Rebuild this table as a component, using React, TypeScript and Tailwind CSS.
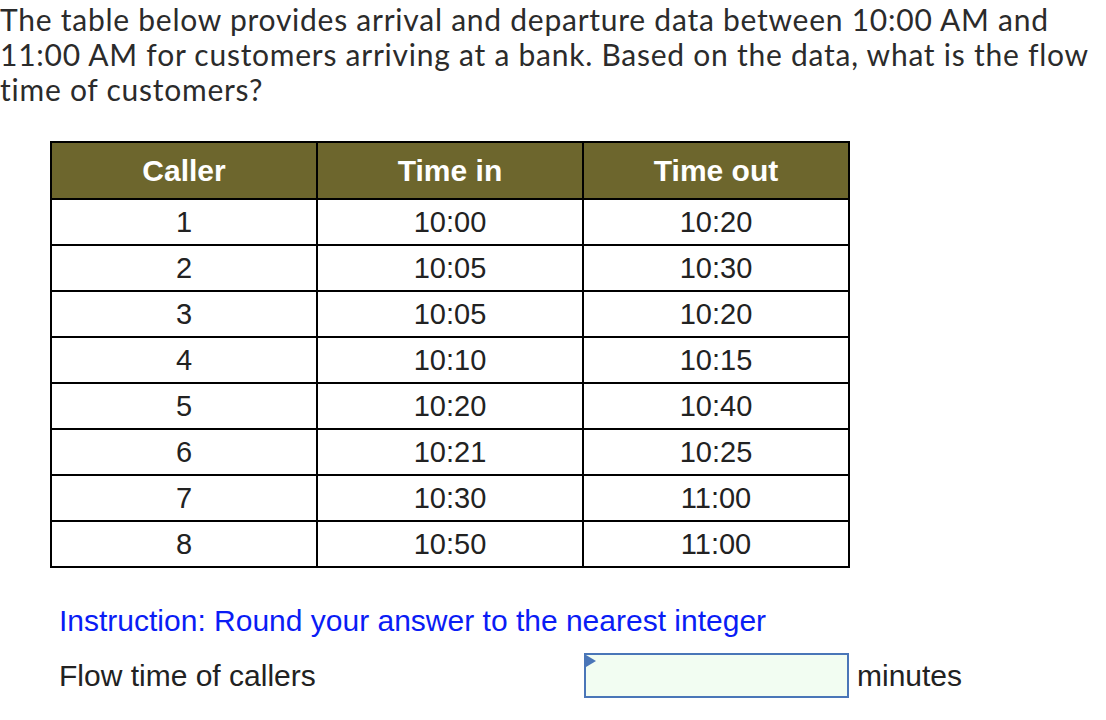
import React from 'react';

const rows: [string, string, string][] = [
  ['1', '10:00', '10:20'],
  ['2', '10:05', '10:30'],
  ['3', '10:05', '10:20'],
  ['4', '10:10', '10:15'],
  ['5', '10:20', '10:40'],
  ['6', '10:21', '10:25'],
  ['7', '10:30', '11:00'],
  ['8', '10:50', '11:00'],
];

export default function App() {
  return (
    <div className="w-[1106px] h-[720px] bg-white overflow-hidden">
      {/* Question */}
      <p className="w-[1090px] text-[30px] leading-[35px] tracking-[0.75px] text-[#2b2b2b] font-['Lato',sans-serif] pt-[2px]">
        The table below provides arrival and departure data between 10:00 AM and 11:00 AM for customers arriving at a bank. Based on the data, what is the flow time of customers?
      </p>

      {/* Data table */}
      <table className="ml-[50px] mt-[34px] w-[800px] border-collapse font-['Liberation_Sans',Arial,sans-serif] text-[29px] text-[#222]">
        <thead>
          <tr className="h-[57px] bg-[#6d662d] text-white text-[30px]">
            <th className="w-[266px] border-2 border-black font-bold">Caller</th>
            <th className="w-[266px] border-2 border-black font-bold">Time in</th>
            <th className="border-2 border-black font-bold">Time out</th>
          </tr>
        </thead>
        <tbody>
          {rows.map(([caller, tin, tout]) => (
            <tr key={caller} className="h-[46px] text-center">
              <td className="border-2 border-black leading-none">{caller}</td>
              <td className="border-2 border-black leading-none">{tin}</td>
              <td className="border-2 border-black leading-none">{tout}</td>
            </tr>
          ))}
        </tbody>
      </table>

      {/* Answer */}
      <div className="pl-[59px] font-['Liberation_Sans',Arial,sans-serif] text-[30px]">
        <p className="mt-[38px] text-[#0a1cf5] leading-[30px]">Instruction: Round your answer to the nearest integer</p>
        <div className="mt-[17px] flex items-center text-[#222]">
          <span className="w-[525px] leading-[30px]">Flow time of callers</span>
          <div className="relative w-[265px] h-[45px] border-2 border-[#4a76b8] bg-[#f2fdf2]">
            <svg className="absolute left-0 top-0" width="12" height="14" viewBox="0 0 12 14">
              <polygon points="0,0 10,6 0,12" fill="#4a76b8" />
            </svg>
          </div>
          <span className="ml-[8px] leading-[30px]">minutes</span>
        </div>
      </div>
    </div>
  );
}
